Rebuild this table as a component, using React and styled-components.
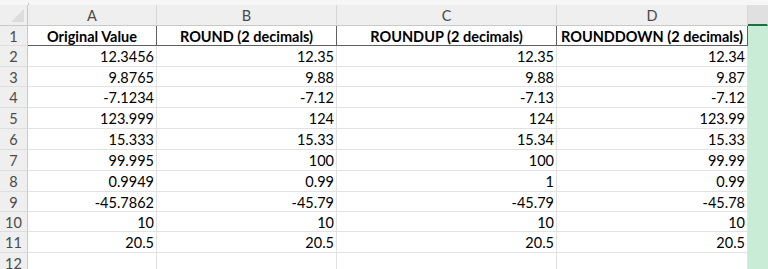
import React from "react";
import styled, { createGlobalStyle } from "styled-components";

const Global = createGlobalStyle`
  html, body { margin: 0; padding: 0; background: #ffffff; }
  body { font-family: Lato, "Open Sans", sans-serif; overflow: hidden; }
`;

const COLS = [129, 180, 220, 191];
const ROW_H = [20, 21, 20, 21, 21, 21, 21, 21, 20, 20, 21, 21];

const Sheet = styled.div`
  display: grid;
  grid-template-columns: 28px ${COLS.map((c) => c + "px").join(" ")} 1fr;
  grid-template-rows: 5px 21px ${ROW_H.map((h) => h + "px").join(" ")};
  width: 768px;
  height: 269px;
  overflow: hidden;
  font-size: 14.5px;
  color: #000;
`;

const TopStrip = styled.div`
  grid-column: 1 / -1;
  background: #f6f6f6;
  border-left: 1px solid transparent;
  display: grid;
  grid-template-columns: 28px 1fr;
`;

const TopTick = styled.div`
  border-right: 1px solid #c8c8c8;
  margin-top: 3px;
`;

const Corner = styled.div`
  position: relative;
  background: #efefef;
  border-right: 1px solid #c9c9c9;
  border-bottom: 1px solid #c9c9c9;
  box-sizing: border-box;
  &::after {
    content: "";
    position: absolute;
    right: 3px;
    bottom: 3px;
    width: 0;
    height: 0;
    border-left: 13px solid transparent;
    border-bottom: 13px solid #dcdcdc;
  }
`;

const ColHead = styled.div`
  box-sizing: border-box;
  background: ${(p) => (p.$selected ? "#e0e0e0" : "#efefef")};
  border-right: 1px solid ${(p) => (p.$selected ? "transparent" : "#d6d6d6")};
  border-bottom: ${(p) => (p.$selected ? "2px solid #1b7145" : "1px solid #c9c9c9")};
  color: #4a4a4a;
  display: flex;
  align-items: center;
  justify-content: center;
  font-size: 14.5px;
`;

const RowHead = styled.div`
  box-sizing: border-box;
  background: #efefef;
  border-right: 1px solid #c9c9c9;
  border-bottom: 1px solid #dedede;
  color: #4a4a4a;
  display: flex;
  align-items: center;
  justify-content: center;
  font-size: 14.5px;
  padding-top: 1px;
`;

const Cell = styled.div`
  box-sizing: border-box;
  display: flex;
  align-items: center;
  justify-content: ${(p) => (p.$head ? "center" : "flex-end")};
  padding: 1px 2px 0 2px;
  white-space: nowrap;
  overflow: hidden;
  font-weight: ${(p) => (p.$head ? 700 : 400)};
  border-right: 1px solid ${(p) => (p.$head ? "#5f5f5f" : "#e2e2e2")};
  border-bottom: 1px solid ${(p) => (p.$head ? "#5f5f5f" : "#e2e2e2")};
`;

const SelectedCell = styled.div`
  background: #c8ecd5;
`;

const headers = [
  "Original Value",
  "ROUND (2 decimals)",
  "ROUNDUP (2 decimals)",
  "ROUNDDOWN (2 decimals)",
];

const data = [
  ["12.3456", "12.35", "12.35", "12.34"],
  ["9.8765", "9.88", "9.88", "9.87"],
  ["-7.1234", "-7.12", "-7.13", "-7.12"],
  ["123.999", "124", "124", "123.99"],
  ["15.333", "15.33", "15.34", "15.33"],
  ["99.995", "100", "100", "99.99"],
  ["0.9949", "0.99", "1", "0.99"],
  ["-45.7862", "-45.79", "-45.79", "-45.78"],
  ["10", "10", "10", "10"],
  ["20.5", "20.5", "20.5", "20.5"],
];

export default function App() {
  const rows = [headers, ...data, ["", "", "", ""]];
  return (
    <>
      <Global />
      <Sheet>
        <TopStrip>
          <TopTick />
          <div />
        </TopStrip>
        <Corner />
        {["A", "B", "C", "D"].map((l) => (
          <ColHead key={l}>{l}</ColHead>
        ))}
        <ColHead $selected />
        {rows.map((r, i) => (
          <React.Fragment key={i}>
            <RowHead>{i + 1}</RowHead>
            {r.map((v, j) => (
              <Cell key={j} $head={i === 0}>
                {v}
              </Cell>
            ))}
            <SelectedCell />
          </React.Fragment>
        ))}
      </Sheet>
    </>
  );
}
